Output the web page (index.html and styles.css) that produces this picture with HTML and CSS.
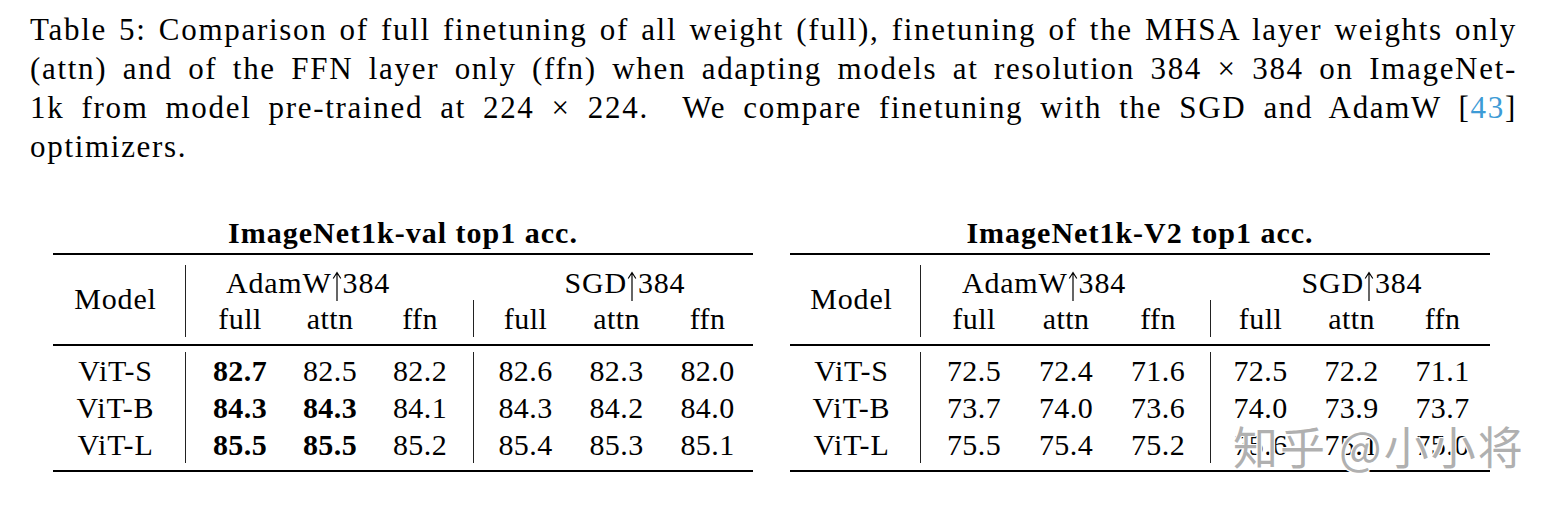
FILE: index.html
```html
<!DOCTYPE html>
<html>
<head>
<meta charset="utf-8">
<link rel="stylesheet" href="styles.css">
</head>
<body>
<div class="page">
  <div class="caption">
    <div class="cl">Table 5: Comparison of full finetuning of all weight (full), finetuning of the MHSA layer weights only</div>
    <div class="cl">(attn) and of the FFN layer only (ffn) when adapting models at resolution 384 × 384 on ImageNet-</div>
    <div class="cl">1k from model pre-trained at 224 × 224.&nbsp; We compare finetuning with the SGD and AdamW [<span class="ref">43</span>]</div>
    <div class="cl last">optimizers.</div>
  </div>

  <div class="tables">
    <div class="tbl t1">
      <div class="title">ImageNet1k-val top1 acc.</div>
      <div class="head">
        <div class="mcol">Model</div>
        <div class="grp g1">
          <div class="glabel">AdamW<svg class="arr" viewBox="0 0 10 30" width="10" height="30"><path d="M5 1.5V30M1.2 7.5L5 1.5L8.8 7.5" fill="none" stroke="#000" stroke-width="1.2"/></svg>384</div>
          <div class="cells subs"><span>full</span><span>attn</span><span>ffn</span></div>
        </div>
        <div class="grp g2">
          <div class="glabel">SGD<svg class="arr" viewBox="0 0 10 30" width="10" height="30"><path d="M5 1.5V30M1.2 7.5L5 1.5L8.8 7.5" fill="none" stroke="#000" stroke-width="1.2"/></svg>384</div>
          <div class="cells subs sep"><span>full</span><span>attn</span><span>ffn</span></div>
        </div>
      </div>
      <div class="body">
        <div class="mcol"><div class="r">ViT-S</div><div class="r">ViT-B</div><div class="r">ViT-L</div></div>
        <div class="grp g1">
          <div class="cells r"><span class="b">82.7</span><span>82.5</span><span>82.2</span></div>
          <div class="cells r"><span class="b">84.3</span><span class="b">84.3</span><span>84.1</span></div>
          <div class="cells r"><span class="b">85.5</span><span class="b">85.5</span><span>85.2</span></div>
        </div>
        <div class="grp g2 sep">
          <div class="cells r"><span>82.6</span><span>82.3</span><span>82.0</span></div>
          <div class="cells r"><span>84.3</span><span>84.2</span><span>84.0</span></div>
          <div class="cells r"><span>85.4</span><span>85.3</span><span>85.1</span></div>
        </div>
      </div>
    </div>

    <div class="tbl t2">
      <div class="title">ImageNet1k-V2 top1 acc.</div>
      <div class="head">
        <div class="mcol">Model</div>
        <div class="grp g1">
          <div class="glabel">AdamW<svg class="arr" viewBox="0 0 10 30" width="10" height="30"><path d="M5 1.5V30M1.2 7.5L5 1.5L8.8 7.5" fill="none" stroke="#000" stroke-width="1.2"/></svg>384</div>
          <div class="cells subs"><span>full</span><span>attn</span><span>ffn</span></div>
        </div>
        <div class="grp g2">
          <div class="glabel">SGD<svg class="arr" viewBox="0 0 10 30" width="10" height="30"><path d="M5 1.5V30M1.2 7.5L5 1.5L8.8 7.5" fill="none" stroke="#000" stroke-width="1.2"/></svg>384</div>
          <div class="cells subs sep"><span>full</span><span>attn</span><span>ffn</span></div>
        </div>
      </div>
      <div class="body">
        <div class="mcol"><div class="r">ViT-S</div><div class="r">ViT-B</div><div class="r">ViT-L</div></div>
        <div class="grp g1">
          <div class="cells r"><span>72.5</span><span>72.4</span><span>71.6</span></div>
          <div class="cells r"><span>73.7</span><span>74.0</span><span>73.6</span></div>
          <div class="cells r"><span>75.5</span><span>75.4</span><span>75.2</span></div>
        </div>
        <div class="grp g2 sep">
          <div class="cells r"><span>72.5</span><span>72.2</span><span>71.1</span></div>
          <div class="cells r"><span>74.0</span><span>73.9</span><span>73.7</span></div>
          <div class="cells r"><span>75.6</span><span>75.1</span><span>75.0</span></div>
        </div>
      </div>
    </div>
  </div>

  <div class="watermark">知乎 @小小将</div>
</div>
</body>
</html>
```

FILE: styles.css
```css
* { box-sizing: border-box; }
html, body { margin: 0; padding: 0; background: #fff; }
body {
  width: 1566px;
  height: 512px;
  overflow: hidden;
  font-family: "Liberation Serif", "Times New Roman", serif;
  color: #000;
}
.page {
  position: relative;
  height: 512px;
  padding: 10px 0 0 30px;
}

/* caption */
.caption {
  width: 1487px;
  font-size: 31px;
  line-height: 39px;
  letter-spacing: 1.7px;
}
.cl { text-align: justify; text-align-last: justify; }
.cl.last { text-align-last: left; }
.ref { color: #3d9bd6; }

/* tables */
.tables {
  display: flex;
  gap: 37px;
  margin-top: 48px;
  padding-left: 23px;
}
.tbl { width: 700px; font-size: 30px; letter-spacing: 0.4px; }
.title {
  text-align: center;
  font-weight: bold;
  line-height: 38px;
  margin-bottom: 1px;
  letter-spacing: 1px;
}
.head {
  display: flex;
  border-top: 2px solid #000;
  border-bottom: 2px solid #000;
  padding: 10px 0 7px;
}
.body {
  display: flex;
  align-items: flex-start;
  border-bottom: 2px solid #000;
  padding: 6px 0 7px;
}
.mcol {
  width: 133px;
  padding-right: 7px;
  text-align: center;
  border-right: 1px solid #222;
  letter-spacing: 0.8px;
}
.t2 .mcol { width: 131px; }
.head .mcol {
  display: flex;
  align-items: center;
  justify-content: center;
  padding-bottom: 4px;
}
.r { height: 37px; line-height: 37px; }

.grp { display: flex; flex-direction: column; }
.t1 .g1 { width: 287px; }
.t1 .g2 { width: 280px; }
.t2 .g1 { width: 289px; }
.t2 .g2 { width: 280px; }

.glabel {
  height: 35px;
  line-height: 35px;
  text-align: center;
  letter-spacing: 0.8px;
}
.g1 .glabel { padding-right: 43px; }
.g2 .glabel { padding-left: 24px; }
.arr {
  display: inline-block;
  vertical-align: -8px;
  margin: 0 1px 0 0;
}

.subs { height: 37px; line-height: 37px; }
.cells { display: flex; }
.cells span { text-align: center; flex: none; }
.sep { border-left: 1px solid #222; }
.b { font-weight: bold; }

.t1 .g1 .cells { padding-left: 9px; }
.t1 .g1 .cells span { width: 90px; }
.t1 .g2 .cells { padding-left: 6px; }
.t1 .g2 .cells span { width: 91px; }
.t2 .g1 .cells { padding-left: 7px; }
.t2 .g1 .cells span { width: 92px; }
.t2 .g2 .cells { padding-left: 4px; }
.t2 .g2 .cells span { width: 91px; }

/* watermark overlay */
.watermark {
  position: absolute;
  left: 1233px;
  top: 418px;
  font-family: "Noto Sans CJK SC", sans-serif;
  font-size: 45px;
  line-height: 56px;
  letter-spacing: 2px;
  color: rgba(150, 150, 150, 0.75);
  text-shadow: 1px 1px 0 #fff, -1px -1px 0 #fff, 1px -1px 0 #fff, -1px 1px 0 #fff;
  white-space: nowrap;
}
```
